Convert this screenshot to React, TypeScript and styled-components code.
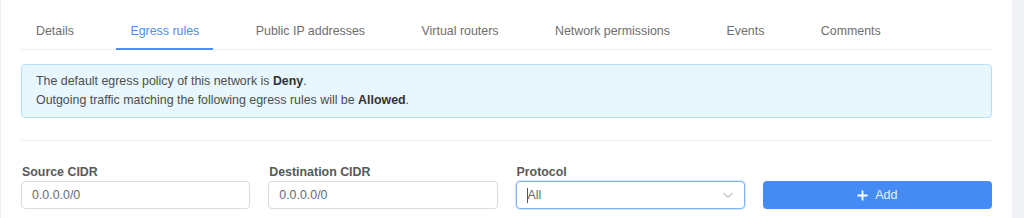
import styled, { createGlobalStyle } from "styled-components";

const Global = createGlobalStyle`
  html, body {
    margin: 0;
    padding: 0;
    background: #f0f2f5;
    font-family: "Liberation Sans", Arial, sans-serif;
    font-size: 12.4px;
    color: #555;
  }
`;

const Panel = styled.div`
  background: #fff;
  width: 1012px;
  height: 218px;
  border-left: 1px solid #ececec;
  padding: 10px 20px 0 20px;
  box-sizing: border-box;
  overflow: hidden;
`;

const TabBar = styled.div`
  display: flex;
  gap: 28.5px;
  padding-left: 1px;
  border-bottom: 1px solid #eeeeee;
`;

const Tab = styled.div<{ $active?: boolean }>`
  position: relative;
  padding: 11px 14px 8px;
  line-height: 20px;
  color: ${(p) => (p.$active ? "#4a90f0" : "#6e6e6e")};
  white-space: nowrap;
  &::after {
    content: "";
    display: ${(p) => (p.$active ? "block" : "none")};
    position: absolute;
    left: 0;
    right: 0;
    bottom: -1px;
    height: 2px;
    background: #4a90f0;
  }
`;

const Alert = styled.div`
  margin-top: 14px;
  background: #e8f6fe;
  border: 1px solid #b9e0fb;
  border-radius: 4px;
  padding: 7px 14px;
  line-height: 19px;
  color: #4d4d4d;
  b {
    color: #333;
  }
`;

const Divider = styled.div`
  margin-top: 22px;
  border-top: 1px solid #eeeeee;
`;

const Form = styled.div`
  margin-top: 22px;
  display: grid;
  grid-template-columns: repeat(4, 1fr);
  column-gap: 18px;
  align-items: end;
`;

const Field = styled.div`
  display: flex;
  flex-direction: column;
`;

const Label = styled.label`
  font-weight: bold;
  line-height: 18px;
  color: #585858;
  padding-left: 1px;
`;

const Box = styled.div<{ $focused?: boolean }>`
  height: 28px;
  box-sizing: border-box;
  border: 1px solid ${(p) => (p.$focused ? "#7fb2f5" : "#dcdcdc")};
  box-shadow: ${(p) => (p.$focused ? "0 0 0 1px rgba(74,144,240,0.2)" : "none")};
  border-radius: 4px;
  display: flex;
  align-items: center;
  padding: 0 10px;
  color: #6a6a6a;
  background: #fff;
`;

const Value = styled.span`
  flex: 1;
  display: flex;
  align-items: center;
`;

const Caret = styled.span`
  display: inline-block;
  width: 1px;
  height: 15px;
  background: #555;
`;

const AddButton = styled.button`
  height: 28px;
  border: none;
  border-radius: 4px;
  background: #448cf3;
  color: #e6efff;
  font-family: inherit;
  font-size: 12.5px;
  display: flex;
  align-items: center;
  justify-content: center;
  gap: 7px;
  cursor: pointer;
`;

const tabs = [
  "Details",
  "Egress rules",
  "Public IP addresses",
  "Virtual routers",
  "Network permissions",
  "Events",
  "Comments",
];

export default function App() {
  return (
    <>
      <Global />
      <Panel>
        <TabBar>
          {tabs.map((t) => (
            <Tab key={t} $active={t === "Egress rules"}>
              {t}
            </Tab>
          ))}
        </TabBar>
        <Alert>
          The default egress policy of this network is <b>Deny</b>.
          <br />
          Outgoing traffic matching the following egress rules will be <b>Allowed</b>.
        </Alert>
        <Divider />
        <Form>
          <Field>
            <Label>Source CIDR</Label>
            <Box>
              <Value>0.0.0.0/0</Value>
            </Box>
          </Field>
          <Field>
            <Label>Destination CIDR</Label>
            <Box>
              <Value>0.0.0.0/0</Value>
            </Box>
          </Field>
          <Field>
            <Label>Protocol</Label>
            <Box $focused>
              <Value>
                <Caret />
                All
              </Value>
              <svg width="12" height="12" viewBox="0 0 12 12">
                <path d="M1.5 4 L6 8.5 L10.5 4" fill="none" stroke="#c4c4c4" strokeWidth="1.1" />
              </svg>
            </Box>
          </Field>
          <AddButton>
            <svg width="11" height="11" viewBox="0 0 12 12">
              <path d="M6 0.5 V11.5 M0.5 6 H11.5" stroke="#fff" strokeWidth="2" />
            </svg>
            Add
          </AddButton>
        </Form>
      </Panel>
    </>
  );
}
